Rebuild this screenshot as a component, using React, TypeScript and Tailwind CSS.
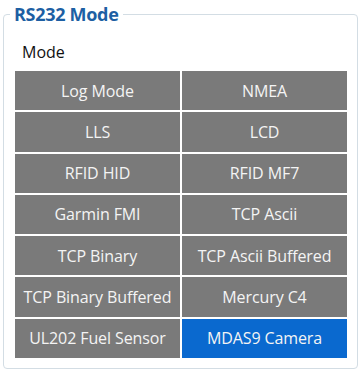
const modes = [
  "Log Mode",
  "NMEA",
  "LLS",
  "LCD",
  "RFID HID",
  "RFID MF7",
  "Garmin FMI",
  "TCP Ascii",
  "TCP Binary",
  "TCP Ascii Buffered",
  "TCP Binary Buffered",
  "Mercury C4",
  "UL202 Fuel Sensor",
  "MDAS9 Camera",
];

const selected = "MDAS9 Camera";

export default function App() {
  return (
    <div
      className="w-[363px] h-[375px] bg-white pt-[3px] pl-[3px]"
      style={{ fontFamily: '"Segoe UI", "Open Sans", sans-serif' }}
    >
      <fieldset className="w-[355px] h-[366px] border border-[#d3dde4] rounded-[4px] pl-[11px] pr-[10px]">
        <legend className="-ml-[5px] px-[4px] text-[18px] leading-[22px] font-bold text-[#1d5fa3] tracking-[-0.3px]">
          RS232 Mode
        </legend>
        <div className="mt-[17px] mb-[9px] pl-[7px] text-[16px] leading-[20px] text-[#111]">
          Mode
        </div>
        <div className="grid grid-cols-2 grid-rows-7 gap-[2px] w-[332px] h-[287px]">
          {modes.map((m) => (
            <button
              key={m}
              className={
                "flex items-center justify-center text-[16px] tracking-[-0.1px] text-[#f4f4f4] " +
                (m === selected ? "bg-[#0a69cf]" : "bg-[#7a7a7a]")
              }
            >
              {m}
            </button>
          ))}
        </div>
      </fieldset>
    </div>
  );
}
